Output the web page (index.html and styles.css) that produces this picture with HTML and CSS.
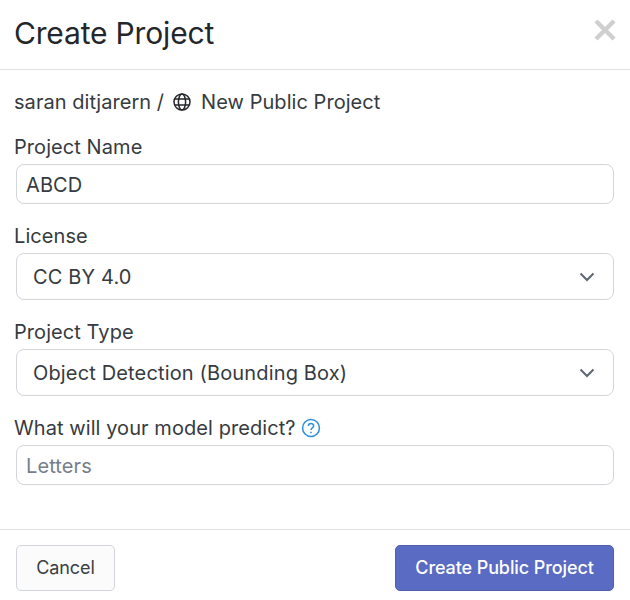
FILE: index.html
```html
<!DOCTYPE html>
<html lang="en">
<head>
    <meta charset="UTF-8">
    <meta name="viewport" content="width=device-width, initial-scale=1.0">
    <title>Create Project</title>
    <link rel="stylesheet" href="styles.css">
</head>
<body>

    <div class="modal">
        <!-- Header -->
        <div class="modal-header">
            <h2>Create Project</h2>
            <button type="button" class="close-btn" aria-label="Close">
                <svg width="24" height="24" viewBox="0 0 24 24"><path d="M3 3 L21 21 M21 3 L3 21" fill="none" stroke="#cfcfcf" stroke-width="4.4"/></svg>
            </button>
        </div>

        <form class="modal-body">
            <div class="owner-line">
                <span>saran ditjarern /</span>
                <svg class="globe" width="20" height="20" viewBox="0 0 20 20" fill="none" stroke="#23272b" stroke-width="1.5">
                    <circle cx="10" cy="10" r="8"/>
                    <ellipse cx="10" cy="10" rx="3.6" ry="8"/>
                    <path d="M2.6 7H17.4M2.6 13H17.4"/>
                </svg>
                <span class="owner-title">New Public Project</span>
            </div>

            <label class="field-label label-name" for="projectName">Project Name</label>
            <input class="text-input" type="text" id="projectName" value="ABCD">

            <label class="field-label" for="license">License</label>
            <div class="select-box" id="license">
                <span>CC BY 4.0</span>
                <svg width="16" height="10" viewBox="0 0 16 10"><path d="M1.5 1.5 L8 8 L14.5 1.5" fill="none" stroke="#5f6673" stroke-width="2"/></svg>
            </div>

            <label class="field-label" for="projectType">Project Type</label>
            <div class="select-box" id="projectType">
                <span>Object Detection (Bounding Box)</span>
                <svg width="16" height="10" viewBox="0 0 16 10"><path d="M1.5 1.5 L8 8 L14.5 1.5" fill="none" stroke="#5f6673" stroke-width="2"/></svg>
            </div>

            <label class="field-label" for="predict">
                What will your model predict?
                <svg width="20" height="20" viewBox="0 0 18 18" fill="none" stroke="#2f8fdc" stroke-width="1.4">
                    <circle cx="9" cy="9" r="7.6"/>
                    <path d="M6.6 7.1 C6.7 4.2 11.4 4.2 11.4 7 C11.4 8.9 9 8.9 9 10.9"/>
                    <path d="M9 12.4V13.8"/>
                </svg>
            </label>
            <input class="text-input" type="text" id="predict" placeholder="Letters">
        </form>

        <!-- Footer -->
        <div class="modal-footer">
            <button type="button" class="btn btn-cancel">Cancel</button>
            <button type="button" class="btn btn-create">Create Public Project</button>
        </div>
    </div>

</body>
</html>
```

FILE: styles.css
```css
* {
    box-sizing: border-box;
    font-family: Inter, "Noto Sans", sans-serif;
}

body {
    background: #fff;
    margin: 0;
    color: #23272b;
}

.modal {
    width: 630px;
    height: 600px;
    overflow: hidden;
}

.modal-header {
    display: flex;
    justify-content: space-between;
    align-items: center;
    height: 70px;
    padding: 0 14px;
    border-bottom: 1px solid #e2e2e2;
}

.modal-header h2 {
    margin: 0 0 3px;
    font-size: 30px;
    font-weight: 400;
    line-height: 34px;
    letter-spacing: -0.17px;
}

.close-btn {
    background: none;
    border: none;
    padding: 0;
    margin: 0 -1px 10px 0;
    height: 24px;
}

.modal-body {
    height: 459px;
    padding: 20px 16px 0;
}

.owner-line {
    display: flex;
    align-items: center;
    gap: 8px;
    height: 24px;
    margin-left: -2px;
    font-size: 20px;
    letter-spacing: 0.05px;
    color: #363b40;
}

.owner-title {
    margin-left: 1px;
}

.field-label {
    display: flex;
    align-items: center;
    gap: 5px;
    height: 24px;
    margin: 20px 0 5px -2px;
    font-size: 20px;
    letter-spacing: 0.07px;
    color: #363b40;
}

.label-name {
    margin-top: 21px;
}

.text-input {
    display: block;
    width: 598px;
    height: 40px;
    padding: 1px 9px 0;
    border: 1px solid #d2d6db;
    border-radius: 8px;
    outline: none;
    font-size: 20px;
    letter-spacing: 0.1px;
    color: #363b40;
}

.text-input::placeholder {
    color: #767d8a;
}

.select-box {
    display: flex;
    justify-content: space-between;
    align-items: center;
    width: 598px;
    height: 47px;
    padding: 0 18px 0 16px;
    border: 1px solid #d2d6db;
    border-radius: 8px;
    font-size: 20px;
    letter-spacing: 0.15px;
    color: #363b40;
}

.modal-footer {
    display: flex;
    justify-content: space-between;
    height: 71px;
    padding: 15px 16px 0;
    border-top: 1px solid #e2e2e2;
}

.btn {
    height: 46px;
    padding: 0 0 2px;
    border-radius: 5px;
    font-size: 18px;
    letter-spacing: -0.1px;
    cursor: pointer;
}

.btn-cancel {
    width: 99px;
    background: #fbfbfc;
    border: 1px solid #d2d6db;
    color: #3a3f44;
}

.btn-create {
    width: 219px;
    background: #5a6bc4;
    border: 1px solid #4f5eaf;
    color: #fff;
    font-weight: 500;
}
```
